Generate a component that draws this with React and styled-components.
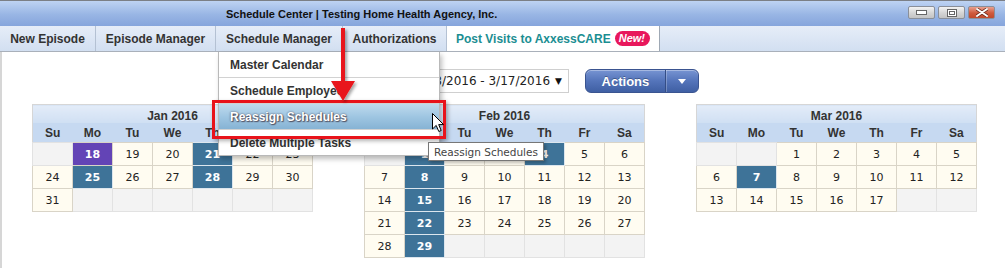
import React from "react";
import styled, { createGlobalStyle, css } from "styled-components";

const GlobalStyle = createGlobalStyle`
  html, body { margin: 0; padding: 0; background: #fff; }
  body { font-family: "Liberation Sans", Arial, sans-serif; }
`;

const Window = styled.div`
  position: relative;
  width: 1005px;
  height: 268px;
  overflow: hidden;
  background: #fff;
`;

const TitleBar = styled.div`
  height: 25px;
  border-top: 1px solid #7b7f86;
  background: linear-gradient(#bed3f3, #98b5e4 55%, #86a5dc);
  display: flex;
  align-items: center;
  padding-left: 226px;
  padding-right: 10px;
  font-weight: bold;
  font-size: 11px;
  color: #111;
`;

const TitleText = styled.div`
  flex: 1;
  padding-top: 1px;
`;

const WinButtons = styled.div`
  display: flex;
  gap: 3px;
  margin-top: -2px;
`;

const WinBtn = styled.div`
  width: 27px;
  height: 13px;
  border: 1px solid #8a8f99;
  border-radius: 2px;
  box-sizing: border-box;
  display: flex;
  align-items: center;
  justify-content: center;
  background: ${({ close }) =>
    close
      ? "linear-gradient(#e9a08f, #cf5a3c 55%, #c14a2c)"
      : "linear-gradient(#f3f3f3, #d4d4d4 55%, #c4c4c4)"};
`;

const TabBar = styled.div`
  height: 25px;
  display: flex;
  background: linear-gradient(#e6edf8, #d2dff1);
  border-bottom: 1px solid #a9b0ba;
`;

const Tab = styled.div`
  width: ${({ w }) => w}px;
  box-sizing: border-box;
  display: flex;
  align-items: center;
  justify-content: center;
  gap: 4px;
  font-size: 12px;
  font-weight: bold;
  color: #333;
  border-right: 1px solid #b4c1d3;
  ${({ active }) =>
    active &&
    css`
      background: #fff;
      color: #1b8e92;
      border-right: 1px solid #9ea8b4;
    `}
`;

const NewBadge = styled.span`
  background: #e8185c;
  color: #fff;
  font-style: italic;
  font-size: 11px;
  font-weight: bold;
  padding: 1px 5px 2px 4px;
  border-radius: 8px;
  line-height: 12px;
`;

const Content = styled.div`
  height: 216px;
  border-left: 2px solid #d6d6d6;
  box-sizing: border-box;
`;

const Toolbar = styled.div`
  display: flex;
  align-items: center;
  gap: 16px;
  padding: 16px 0 0 406px;
  height: 26px;
`;

const DateRange = styled.div`
  height: 24px;
  box-sizing: border-box;
  border: 1px solid #cfcfcf;
  display: flex;
  align-items: center;
  padding: 0 6px;
  font-family: "DejaVu Sans", Tahoma, sans-serif;
  font-size: 12px;
  color: #222;
  gap: 5px;
`;

const Caret = styled.span`
  font-size: 9px;
  color: #111;
`;

const ActionsButton = styled.div`
  width: 114px;
  height: 24px;
  box-sizing: border-box;
  border: 1px solid #3a5490;
  border-radius: 6px;
  background: linear-gradient(#7794d2, #5474ba 50%, #3f5fa3);
  display: flex;
  color: #fff;
  font-size: 13px;
  font-weight: bold;
  box-shadow: inset 0 1px 0 rgba(255, 255, 255, 0.35);
  text-shadow: 0 -1px 0 rgba(0, 0, 0, 0.3);
`;

const ActionsLabel = styled.div`
  flex: 1;
  display: flex;
  align-items: center;
  justify-content: center;
  border-right: 1px solid #344d85;
`;

const ActionsCaret = styled.div`
  width: 31px;
  display: flex;
  align-items: center;
  justify-content: center;
  border-left: 1px solid rgba(255, 255, 255, 0.25);
`;

const CalendarRow = styled.div`
  display: flex;
  align-items: flex-start;
  gap: 51px;
  padding: 10px 0 0 30px;
`;

const CalTable = styled.table`
  border-collapse: collapse;
  width: 281px;
  table-layout: fixed;
  border: 1px solid #d6d6d6;
`;

const MonthTitle = styled.th`
  height: 18px;
  padding: 0;
  font-size: 12px;
  font-weight: bold;
  color: #333;
  background: linear-gradient(#e3ecf8, #cfdff3);
  vertical-align: bottom;
`;

const DayName = styled.th`
  height: 19px;
  padding: 0;
  font-size: 12px;
  font-weight: bold;
  color: #333;
  background: #c6d9f1;
`;

const Cell = styled.td`
  height: 22px;
  padding: 0;
  text-align: center;
  font-family: "DejaVu Sans", Tahoma, sans-serif;
  font-size: 11px;
  color: #222;
  border: 1px solid #d9d4c7;
  background: #fffcf1;
  ${({ kind }) =>
    kind === "empty" &&
    css`
      background: #f3f3f3;
      border-color: #e2e2e2;
    `}
  ${({ kind }) =>
    kind === "hi" &&
    css`
      background: #3e7398;
      color: #fff;
      font-weight: bold;
      border-color: #dce6ee;
    `}
  ${({ kind }) =>
    kind === "purple" &&
    css`
      background: #6344b6;
      color: #fff;
      font-weight: bold;
    `}
`;

const Menu = styled.div`
  position: absolute;
  top: 52px;
  left: 218px;
  width: 220px;
  background: #fff;
  border: 1px solid #b9b9b9;
  border-top: none;
  box-shadow: 2px 3px 5px rgba(0, 0, 0, 0.25);
`;

const MenuItem = styled.div`
  height: 25px;
  display: flex;
  align-items: center;
  padding-left: 11px;
  font-size: 12px;
  font-weight: bold;
  color: #333;
  border-bottom: 1px solid #d2d2d2;
  &:last-child { border-bottom: none; }
  ${({ selected }) =>
    selected &&
    css`
      background: linear-gradient(#c0dbee, #9fc6e2 50%, #86b3d4);
      color: #fff;
      text-shadow: 0 0 2px #445, 1px 1px 1px #556;
    `}
`;

const RedBox = styled.div`
  position: absolute;
  top: 100px;
  left: 212px;
  width: 234px;
  height: 39px;
  box-sizing: border-box;
  border: 3px solid #e8131b;
  box-shadow: 2px 2px 4px rgba(0, 0, 0, 0.3);
`;

const Overlay = styled.svg`
  position: absolute;
  overflow: visible;
`;

const Tooltip = styled.div`
  position: absolute;
  top: 142px;
  left: 428px;
  height: 19px;
  box-sizing: border-box;
  padding: 0 5px;
  display: flex;
  align-items: center;
  background: #fff;
  border: 1px solid #777;
  box-shadow: 2px 2px 3px rgba(0, 0, 0, 0.25);
  font-family: "DejaVu Sans", Tahoma, sans-serif;
  font-size: 10.5px;
  color: #444;
`;

const DAYS = ["Su", "Mo", "Tu", "We", "Th", "Fr", "Sa"];

const months = [
  {
    name: "Jan 2016",
    weeks: [
      [null, [18, "purple"], 19, 20, [21, "hi"], 22, 23],
      [24, [25, "hi"], 26, 27, [28, "hi"], 29, 30],
      [31, null, null, null, null, null, null],
    ],
  },
  {
    name: "Feb 2016",
    weeks: [
      [null, [1, "hi"], 2, 3, [4, "hi"], 5, 6],
      [7, [8, "hi"], 9, 10, 11, 12, 13],
      [14, [15, "hi"], 16, 17, 18, 19, 20],
      [21, [22, "hi"], 23, 24, 25, 26, 27],
      [28, [29, "hi"], null, null, null, null, null],
    ],
  },
  {
    name: "Mar 2016",
    weeks: [
      [null, null, 1, 2, 3, 4, 5],
      [6, [7, "hi"], 8, 9, 10, 11, 12],
      [13, 14, 15, 16, 17, null, null],
    ],
  },
];

const Calendar = ({ month }) => (
  <CalTable>
    <thead>
      <tr>
        <MonthTitle colSpan={7}>{month.name}</MonthTitle>
      </tr>
      <tr>
        {DAYS.map((d) => (
          <DayName key={d}>{d}</DayName>
        ))}
      </tr>
    </thead>
    <tbody>
      {month.weeks.map((week, wi) => (
        <tr key={wi}>
          {week.map((c, ci) => {
            if (c === null) return <Cell key={ci} kind="empty" />;
            const [num, kind] = Array.isArray(c) ? c : [c, "day"];
            return (
              <Cell key={ci} kind={kind}>
                {num}
              </Cell>
            );
          })}
        </tr>
      ))}
    </tbody>
  </CalTable>
);

const tabs = [
  { label: "New Episode", w: 96 },
  { label: "Episode Manager", w: 120 },
  { label: "Schedule Manager", w: 127 },
  { label: "Authorizations", w: 104 },
];

const App = () => (
  <>
    <GlobalStyle />
    <Window>
      <TitleBar>
        <TitleText>Schedule Center | Testing Home Health Agency, Inc.</TitleText>
        <WinButtons>
          <WinBtn>
            <svg width="11" height="5"><rect x="0.5" y="0.5" width="10" height="4" fill="#fff" stroke="#666" /></svg>
          </WinBtn>
          <WinBtn>
            <svg width="10" height="8"><rect x="0.5" y="0.5" width="9" height="7" fill="#fff" stroke="#666" /><rect x="2.5" y="2.5" width="5" height="3" fill="none" stroke="#666" /></svg>
          </WinBtn>
          <WinBtn close>
            <svg width="12" height="9">
              <path d="M1 1 L11 8 M11 1 L1 8" stroke="#6b2a1c" strokeWidth="3.4" strokeLinecap="round" />
              <path d="M1 1 L11 8 M11 1 L1 8" stroke="#fff" strokeWidth="2" strokeLinecap="round" />
            </svg>
          </WinBtn>
        </WinButtons>
      </TitleBar>

      <TabBar>
        {tabs.map((t) => (
          <Tab key={t.label} w={t.w}>
            {t.label}
          </Tab>
        ))}
        <Tab w={213} active>
          Post Visits to AxxessCARE <NewBadge>New!</NewBadge>
        </Tab>
      </TabBar>

      <Content>
        <Toolbar>
          <DateRange>
            2/18/2016 - 3/17/2016 <Caret>▼</Caret>
          </DateRange>
          <ActionsButton>
            <ActionsLabel>Actions</ActionsLabel>
            <ActionsCaret>
              <svg width="8" height="5"><path d="M0 0 L8 0 L4 5 Z" fill="#fff" /></svg>
            </ActionsCaret>
          </ActionsButton>
        </Toolbar>
        <CalendarRow>
          {months.map((m) => (
            <Calendar key={m.name} month={m} />
          ))}
        </CalendarRow>
      </Content>

      <Menu>
        <MenuItem>Master Calendar</MenuItem>
        <MenuItem>Schedule Employee</MenuItem>
        <MenuItem selected>Reassign Schedules</MenuItem>
        <MenuItem>Delete Multiple Tasks</MenuItem>
      </Menu>

      <RedBox />

      <Overlay style={{ left: 330, top: 28 }} width="30" height="76">
        <defs>
          <filter id="sh" x="-50%" y="-20%" width="200%" height="150%">
            <feDropShadow dx="2" dy="2" stdDeviation="1.5" floodOpacity="0.35" />
          </filter>
        </defs>
        <g filter="url(#sh)">
          <rect x="11" y="0" width="4" height="56" fill="#e8131b" />
          <path d="M1 53 L25 53 L13 73 Z" fill="#e8131b" />
        </g>
      </Overlay>

      <Tooltip>Reassign Schedules</Tooltip>

      <Overlay style={{ left: 432, top: 113 }} width="13" height="20">
        <path
          d="M0.5 0.5 L0.5 16 L4.2 12.4 L6.8 18.5 L9.2 17.5 L6.7 11.6 L11.6 11.6 Z"
          fill="#fff"
          stroke="#000"
          strokeWidth="1"
          strokeLinejoin="round"
        />
      </Overlay>
    </Window>
  </>
);

export default App;
